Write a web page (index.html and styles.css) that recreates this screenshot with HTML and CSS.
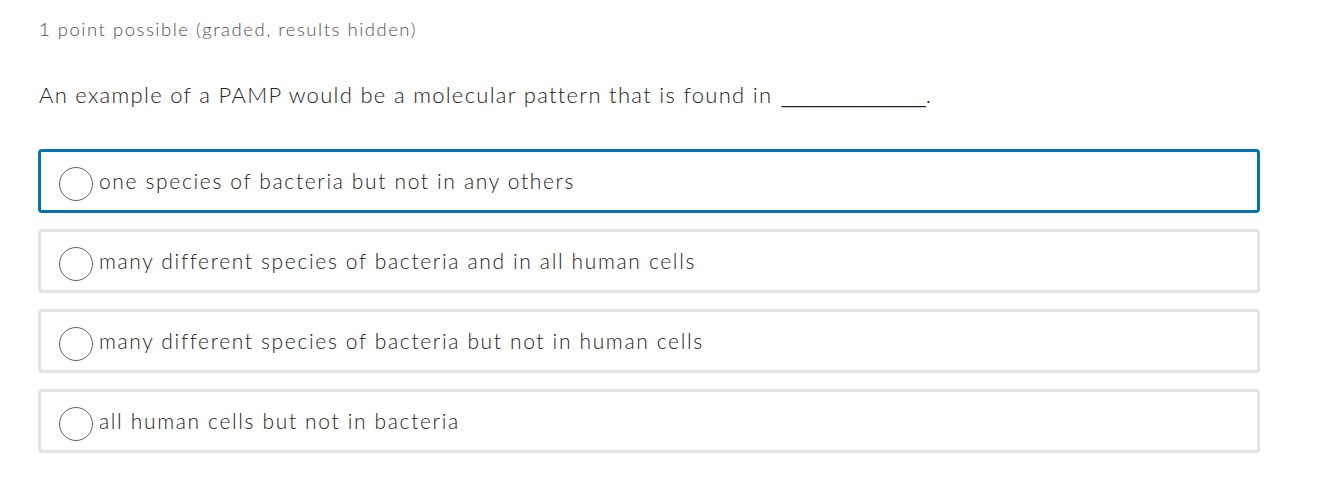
FILE: index.html
```html
<!DOCTYPE html>
<html>
<head>
<meta charset="utf-8">
<link rel="stylesheet" href="styles.css">
</head>
<body>
<div class="problem">
  <div class="meta">1 point possible (graded, results hidden)</div>
  <p class="question">An example of a PAMP would be a molecular pattern that is found in <span class="blank">____________</span>.</p>
  <div class="choices">
    <label class="choice selected"><span class="radio"></span><span class="text">one species of bacteria but not in any others</span></label>
    <label class="choice"><span class="radio"></span><span class="text">many different species of bacteria and in all human cells</span></label>
    <label class="choice"><span class="radio"></span><span class="text">many different species of bacteria but not in human cells</span></label>
    <label class="choice"><span class="radio"></span><span class="text">all human cells but not in bacteria</span></label>
  </div>
</div>
</body>
</html>
```
FILE: styles.css
```css
html, body {
  margin: 0;
  padding: 0;
  background: #fff;
}
body {
  font-family: Lato, "Open Sans", sans-serif;
  font-weight: 300;
  color: #222;
}
.problem {
  padding: 18px 0 0 38px;
  width: 1222px;
}
.meta {
  font-size: 18.5px;
  line-height: 22px;
  letter-spacing: 1.52px;
  color: #505050;
  padding-left: 1px;
}
.question {
  margin: 42px 0 0 0;
  font-size: 22px;
  line-height: 26px;
  letter-spacing: 1.3px;
  padding-left: 1px;
}
.blank {
  font-family: "Liberation Sans", sans-serif;
  font-weight: 400;
  font-size: 21.6px;
  line-height: 10px;
  letter-spacing: 0;
  margin-left: 2px;
}
.choices {
  margin-top: 41px;
  display: flex;
  flex-direction: column;
  gap: 16px;
}
.choice {
  box-sizing: border-box;
  height: 64px;
  border: 3px solid #e4e4e4;
  border-radius: 4px;
  display: flex;
  align-items: center;
  padding-left: 18px;
}
.choice.selected {
  border-color: #0075b4;
}
.radio {
  box-sizing: border-box;
  width: 34px;
  height: 34px;
  border: 1.5px solid #616161;
  border-radius: 50%;
  margin-top: 6px;
  flex: none;
}
.text {
  margin-left: 6px;
  font-size: 21px;
  line-height: 26px;
  letter-spacing: 1.65px;
  margin-top: -1px;
}
```
